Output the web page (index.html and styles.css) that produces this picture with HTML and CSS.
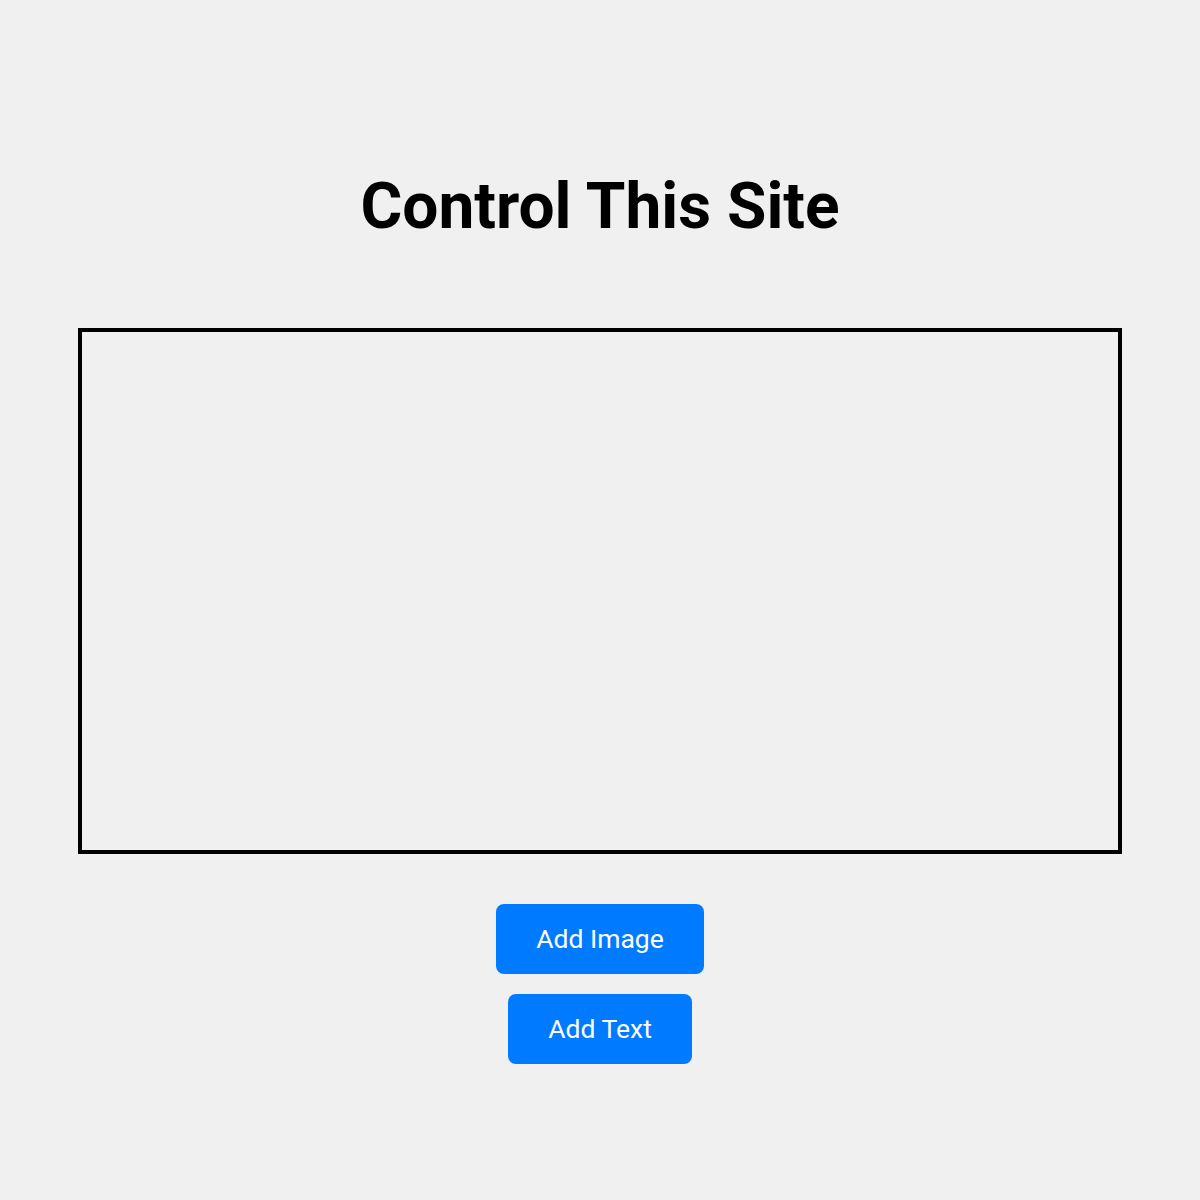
FILE: index.html
```html
<!DOCTYPE html>
<html lang="en">
<head>
<meta charset="utf-8">
<title>Control This Site</title>
<link rel="stylesheet" href="styles.css">
</head>
<body>
<main class="page">
  <h1 class="title">Control This Site</h1>
  <div class="canvas"></div>
  <div class="actions">
    <button class="btn btn-image" type="button">Add Image</button>
    <button class="btn btn-text" type="button">Add Text</button>
  </div>
</main>
</body>
</html>
```

FILE: styles.css
```css
html, body {
  margin: 0;
  padding: 0;
  background: #f0f0f0;
}
body {
  font-family: Roboto, "Noto Sans", sans-serif;
  color: #000;
}
.page {
  display: flex;
  flex-direction: column;
  align-items: center;
  padding: 169px 78px 0;
}
.title {
  margin: 0;
  font-size: 64px;
  font-weight: 700;
  line-height: 75px;
}
.canvas {
  box-sizing: border-box;
  margin-top: 84px;
  width: 100%;
  height: 526px;
  border: 4px solid #000;
}
.actions {
  display: flex;
  flex-direction: column;
  align-items: center;
  gap: 20px;
  margin-top: 50px;
}
.btn {
  box-sizing: border-box;
  height: 70px;
  padding: 0 40px;
  border: none;
  border-radius: 8px;
  background: #007bff;
  color: #fff;
  font-family: Roboto, "Noto Sans", sans-serif;
  font-size: 26.5px;
  line-height: 30px;
}
```
